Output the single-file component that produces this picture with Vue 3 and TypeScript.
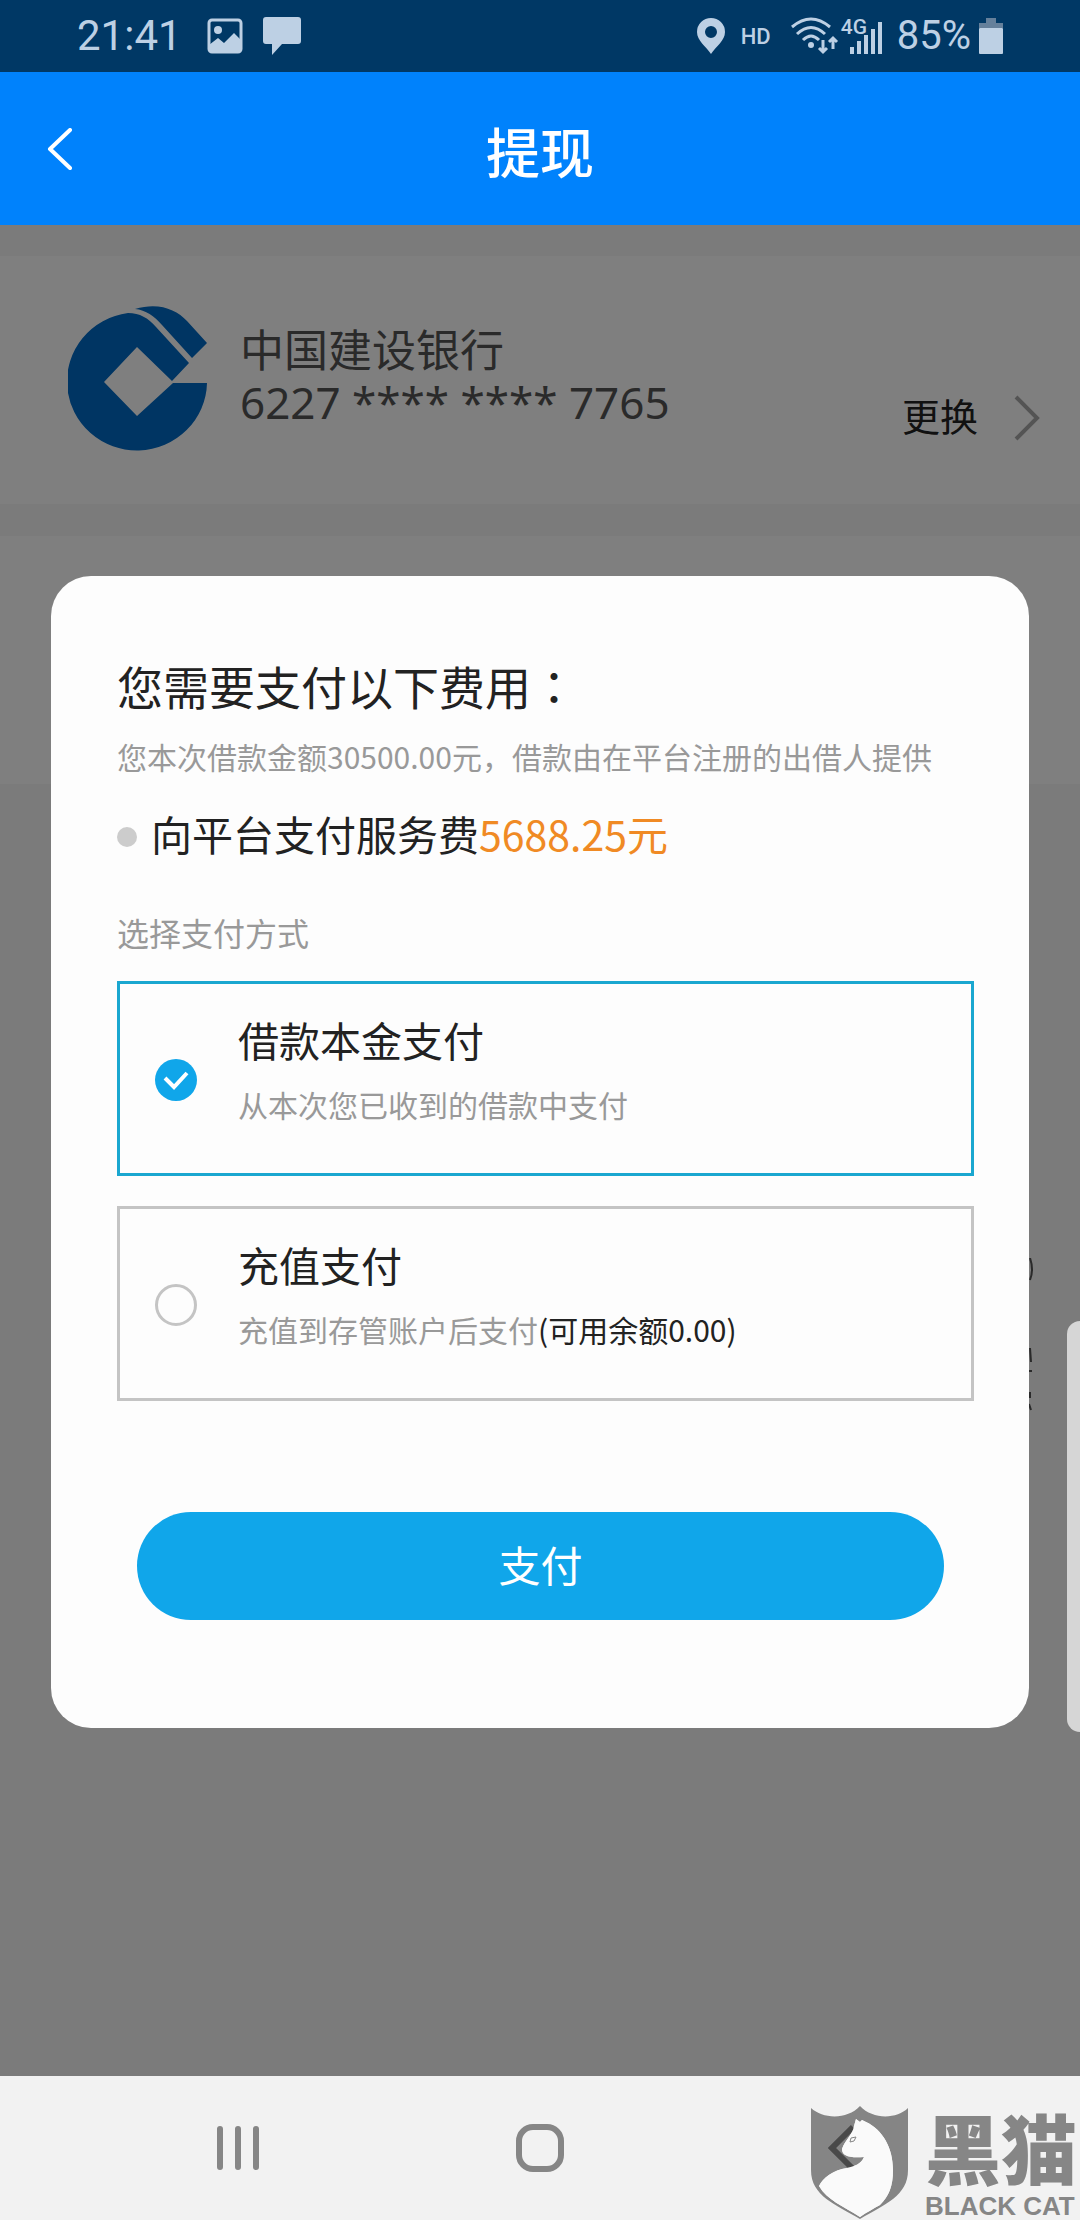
<script setup lang="ts">
import { ref } from 'vue'

interface PayOption {
  id: string
  name: string
  hint: string
  extra?: string
}

const options: PayOption[] = [
  { id: 'principal', name: '借款本金支付', hint: '从本次您已收到的借款中支付' },
  { id: 'recharge', name: '充值支付', hint: '充值到存管账户后支付', extra: '(可用余额0.00)' },
]

const selected = ref<string>('principal')
</script>

<template>
  <div class="screen">
    <div class="status">
      <div class="status-group">
        <span class="status-text time">21:41</span>
        <svg class="picture" width="36" height="36" viewBox="0 0 36 36">
          <rect x="2" y="2" width="32" height="32" rx="3" fill="none" stroke="currentColor" stroke-width="3" />
          <circle cx="11" cy="12" r="4" fill="currentColor" />
          <path d="M2 27 L11 20 L17 25 L27 15 L34 22 V34 H2Z" fill="currentColor" />
        </svg>
        <svg width="38" height="38" viewBox="0 0 38 38">
          <path d="M3 0 H35 Q38 0 38 3 V24 Q38 27 35 27 H19 L9 38 V27 H3 Q0 27 0 24 V3 Q0 0 3 0Z" fill="currentColor" />
        </svg>
      </div>
      <div class="status-group">
        <svg width="28" height="36" viewBox="0 0 28 36">
          <path fill-rule="evenodd" d="M14 0 A14 14 0 0 1 28 14 C28 23 19 28 14 36 C9 28 0 23 0 14 A14 14 0 0 1 14 0Z M14 8 A6 6 0 1 0 14 20 A6 6 0 1 0 14 8Z" fill="currentColor" />
        </svg>
        <span class="hd">HD</span>
        <svg class="wifi" width="48" height="38" viewBox="0 0 48 38">
          <g fill="none" stroke="currentColor" stroke-width="3">
            <path d="M1 10 Q20 -6 39 10" />
            <path d="M6 17 Q20 4 34 17" />
            <path d="M12 23 Q20 15 28 23" />
            <path d="M32 23 V35 M28 31 L32 35 L36 31" />
            <path d="M42 32 V21 M38 25 L42 21 L46 25" />
          </g>
          <circle cx="20" cy="28" r="3" fill="currentColor" />
        </svg>
        <div class="signal">
          <span class="network">4G</span>
          <svg width="42" height="38" viewBox="0 0 42 38">
            <g fill="currentColor">
              <rect x="9" y="30" width="4" height="7" />
              <rect x="16" y="24" width="4" height="13" />
              <rect x="23" y="18" width="4" height="19" />
              <rect x="30" y="12" width="4" height="25" />
              <rect x="37" y="5" width="4" height="32" />
            </g>
          </svg>
        </div>
        <span class="status-text">85%</span>
        <svg class="battery" width="24" height="36" viewBox="0 0 24 36">
          <path d="M7 0 H17 V5 H24 V10 H0 V5 H7Z" fill="#65809b" />
          <rect y="10" width="24" height="26" rx="1" fill="currentColor" />
        </svg>
      </div>
    </div>

    <header class="header">
      <button class="back" type="button" aria-label="返回">
        <svg width="26" height="42" viewBox="0 0 26 42">
          <path d="M23 2 L3 21 L23 40" fill="none" stroke="currentColor" stroke-width="4" stroke-linecap="round" stroke-linejoin="round" />
        </svg>
      </button>
      <h1>提现</h1>
      <span></span>
    </header>

    <main class="content">
      <section class="card bank">
        <svg class="bank-logo" width="139" height="145" viewBox="0 0 139 145" role="img" aria-label="中国建设银行">
          <g fill="#006ac6">
            <path d="M60 7 C72 7 80 12 88 21 L121 57 L104 75 L69 41 L36 76 L69 110 L105 77 H139 A70 69 0 1 1 60 7Z" />
            <path d="M67 3 C90 -4 108 3 119 15 L139 37 L124 52 L94 19 C86 10 78 4 67 3Z" />
          </g>
        </svg>
        <div class="bank-info">
          <span class="bank-name">中国建设银行</span>
          <span class="bank-number">6227 **** **** 7765</span>
        </div>
        <button class="change" type="button">
          更换
          <svg width="26" height="46" viewBox="0 0 26 46">
            <path d="M2 2 L23 23 L2 44" fill="none" stroke="#a8a8a8" stroke-width="4" />
          </svg>
        </button>
      </section>
      <section class="card amount"></section>

      <div class="overlay">
        <svg class="peek" width="4" height="154" viewBox="0 0 4 154" aria-hidden="true">
          <path d="M1 0 Q5 12 1 22 M1 90 L2 104 M0 113 H3 M1 134 V140 M0 146 L2 152" fill="none" stroke="#2a2a2a" stroke-width="2" />
        </svg>
        <form class="modal" role="dialog" aria-labelledby="fee-title" @submit.prevent>
          <h2 id="fee-title">您需要支付以下费用<span class="colon">：</span></h2>
          <p class="note">您本次借款金额30500.00元，借款由在平台注册的出借人提供</p>
          <p class="fee"><i class="dot"></i>向平台支付服务费<span class="price">5688.25元</span></p>
          <p id="method-label" class="method">选择支付方式</p>
          <div class="options" role="radiogroup" aria-labelledby="method-label">
            <label v-for="o in options" :key="o.id" class="option" :class="{ active: selected === o.id }">
              <span class="radio">
                <input v-model="selected" type="radio" name="pay" :value="o.id" />
                <svg v-if="selected === o.id" width="42" height="42" viewBox="0 0 42 42">
                  <path d="M10 19 L19 28 L32 14" fill="none" stroke="#fff" stroke-width="4" />
                </svg>
              </span>
              <span class="option-text">
                <span class="option-name">{{ o.name }}</span>
                <span class="option-hint">{{ o.hint }}<span v-if="o.extra" class="extra">{{ o.extra }}</span></span>
              </span>
            </label>
          </div>
          <button class="pay" type="submit">支付</button>
        </form>
        <div class="edge-handle"></div>
      </div>
    </main>

    <nav class="nav">
      <button type="button" aria-label="最近任务">
        <svg width="44" height="48" viewBox="0 0 44 48">
          <path d="M4 5 V43 M22 5 V43 M40 5 V43" stroke="#868686" stroke-width="6" stroke-linecap="round" />
        </svg>
      </button>
      <button type="button" aria-label="主屏幕">
        <svg width="50" height="50" viewBox="0 0 50 50">
          <rect x="4" y="4" width="42" height="42" rx="14" fill="none" stroke="#868686" stroke-width="6" />
        </svg>
      </button>
      <button type="button" aria-label="返回">
        <svg width="28" height="48" viewBox="0 0 28 48">
          <path d="M25 3 L4 24 L25 45" fill="none" stroke="#868686" stroke-width="6" />
        </svg>
      </button>
      <div class="watermark">
        <svg width="98" height="114" viewBox="0 0 98 114">
          <path
            fill="#000"
            fill-opacity="0.45"
            fill-rule="evenodd"
            d="M0 2 C12 13 36 14 49 0 C62 14 86 13 97 2 V64 C97 90 74 98 49 113 C24 98 0 90 0 64Z M45 13 L43 20 C42 28 34 34 31 43 C31 50 38 52 53 51 C50 58 44 60 36 62 C22 64 12 72 8 80 C16 94 32 100 49 111 C56 106 62 103 69 99 C78 90 82 80 82 64 C82 42 72 24 55 16 L51 14 L49 16Z"
          />
          <path
            fill="#fafafa"
            d="M45 13 L43 20 C42 28 34 34 31 43 C31 50 38 52 53 51 C50 58 44 60 36 62 C22 64 12 72 8 80 C16 94 32 100 49 111 C56 106 62 103 69 99 C78 90 82 80 82 64 C82 42 72 24 55 16 L51 14 L49 16Z"
          />
          <path d="M39 36 L40 32 L45 31 L43 35Z" fill="none" stroke="#868686" stroke-width="1" />
        </svg>
        <div class="brand">
          <span class="brand-cn">黑猫</span>
          <span class="brand-en">BLACK CAT</span>
        </div>
      </div>
    </nav>
  </div>
</template>

<style>
body {
  margin: 0;
}
</style>

<style scoped>
.screen {
  display: flex;
  flex-direction: column;
  min-height: 100vh;
  font-family: 'Noto Sans CJK SC', sans-serif;
  color: #222;
}

h1,
h2,
p {
  margin: 0;
  font-weight: 400;
}

button {
  display: flex;
  align-items: center;
  padding: 0;
  border: 0;
  background: none;
  color: inherit;
  font: inherit;
}

svg {
  display: block;
  flex: none;
}

.status {
  display: flex;
  align-items: center;
  justify-content: space-between;
  height: 72px;
  padding: 0 77px;
  background: #003865;
  color: #bdd0e4;
  font-family: Roboto, sans-serif;
}

.status-group {
  display: flex;
  align-items: center;
}

.status-text {
  font-size: 40px;
  line-height: 48px;
}

.status-text.time {
  width: 110px;
  font-size: 42px;
}

.picture {
  margin: 0 20px;
}

.hd {
  width: 34px;
  margin: 0 16px;
  font-size: 22px;
  font-weight: 500;
}

.signal {
  display: grid;
  margin: 0 14px 0 2px;
}

.signal > * {
  grid-area: 1 / 1;
}

.network {
  font-size: 21px;
  font-weight: 500;
  line-height: 20px;
}

.battery {
  margin-left: 8px;
}

.header {
  display: grid;
  grid-template-columns: 1fr auto 1fr;
  align-items: center;
  height: 153px;
  padding: 0 47px;
  background: #0082fc;
  color: #fff;
}

h1 {
  padding-top: 4px;
  font-size: 54px;
  font-weight: 500;
  line-height: 72px;
}

.content {
  position: relative;
  flex: 1;
  padding-top: 31px;
  background: #f6f6f6;
}

.card {
  background: #fff;
}

.bank {
  display: flex;
  height: 248px;
  margin-bottom: 32px;
  padding: 0 40px 0 68px;
}

.bank-logo {
  margin-top: 50px;
}

.bank-info {
  display: flex;
  flex: 1;
  flex-direction: column;
  margin: 65px 0 0 33px;
  color: #555;
  font-size: 44px;
  line-height: 54px;
}

.bank-number {
  font-family: 'Noto Sans', sans-serif;
}

.change {
  gap: 36px;
  height: 56px;
  margin-top: 131px;
  font-size: 38px;
  line-height: 56px;
}

.change svg {
  margin-top: 6px;
}

.amount {
  height: 248px;
}

.overlay {
  position: absolute;
  inset: 0;
  padding: 351px 51px 0;
  background: rgba(0, 0, 0, 0.5);
}

.peek {
  position: absolute;
  top: 1033px;
  right: 47px;
}

.modal {
  position: relative;
  padding: 79px 55px 108px 66px;
  border-radius: 40px;
  background: #fdfdfd;
}

h2 {
  font-size: 46px;
  line-height: 60px;
}

.colon {
  font-family: 'Noto Sans CJK TC', sans-serif;
}

.note {
  margin-top: 19px;
  color: #999;
  font-size: 30px;
  line-height: 44px;
}

.fee {
  display: flex;
  align-items: center;
  margin-top: 25px;
  font-size: 41px;
  line-height: 60px;
}

.dot {
  width: 20px;
  height: 20px;
  margin: 8px 14px 0 0;
  border-radius: 50%;
  background: #ccc;
}

.price {
  color: #f08a24;
}

.method {
  margin-top: 47px;
  color: #999;
  font-size: 32px;
  line-height: 44px;
}

.options {
  display: flex;
  flex-direction: column;
  gap: 30px;
  margin-top: 27px;
}

.option {
  display: flex;
  align-items: center;
  gap: 41px;
  padding: 27px 35px 49px;
  border: 3px solid #c4c4c4;
}

.option.active {
  border-color: #1aa7d0;
}

.radio {
  display: grid;
  margin-top: 24px;
}

.radio > * {
  grid-area: 1 / 1;
}

.radio input {
  box-sizing: border-box;
  width: 42px;
  height: 42px;
  margin: 0;
  border: 3px solid #c4c4c4;
  border-radius: 50%;
  appearance: none;
}

.radio input:checked {
  border: 0;
  background: #10a6ea;
}

.option-text {
  display: flex;
  flex-direction: column;
  gap: 17px;
}

.option-name {
  font-size: 41px;
  line-height: 56px;
}

.option-hint {
  color: #999;
  font-size: 30px;
  line-height: 40px;
}

.extra {
  color: #222;
}

.pay {
  justify-content: center;
  width: calc(100% - 50px);
  height: 108px;
  margin: 111px 30px 0 20px;
  padding-bottom: 6px;
  border-radius: 54px;
  background: #10a6ea;
  color: #fff;
  font-size: 42px;
}

.edge-handle {
  position: absolute;
  top: 1096px;
  right: 0;
  width: 13px;
  height: 411px;
  border-radius: 14px 0 0 14px;
  background: #d6d6d6;
}

.nav {
  position: relative;
  display: grid;
  grid-template-columns: repeat(3, 28%);
  justify-content: center;
  height: 144px;
  background: #f2f2f2;
}

.nav button {
  justify-content: center;
}

.watermark {
  position: absolute;
  right: 0;
  bottom: 0;
  display: flex;
  gap: 16px;
  color: #868686;
  pointer-events: none;
}

.brand {
  display: flex;
  flex-direction: column;
  gap: 6px;
  width: 155px;
  white-space: nowrap;
}

.brand-cn {
  font-size: 76px;
  font-weight: 900;
  line-height: 80px;
}

.brand-en {
  font-family: 'Liberation Sans', sans-serif;
  font-size: 26px;
  font-weight: 700;
  line-height: 28px;
}
</style>
